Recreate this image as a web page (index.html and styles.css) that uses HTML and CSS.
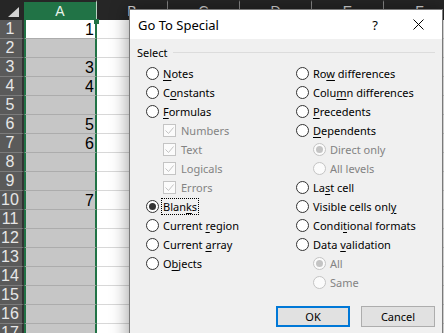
FILE: index.html
```html
<!DOCTYPE html>
<html>
<head>
<title>Go To Special</title>
<meta charset="utf-8">
<link rel="stylesheet" href="styles.css">
</head>
<body>

<div class="sheet">
	<div class="corner"><span class="tri"></span></div>
	<div class="colhead sel">A</div>
	<div class="colhead">B</div>
	<div class="colhead">C</div>
	<div class="colhead">D</div>
	<div class="colhead">E</div>
	<div class="colhead">F</div>

	<div class="rowhead">1</div><div class="cell a active">1</div><div class="cell"></div><div class="cell"></div><div class="cell"></div><div class="cell"></div><div class="cell"></div>
	<div class="rowhead">2</div><div class="cell a"></div><div class="cell"></div><div class="cell"></div><div class="cell"></div><div class="cell"></div><div class="cell"></div>
	<div class="rowhead">3</div><div class="cell a">3</div><div class="cell"></div><div class="cell"></div><div class="cell"></div><div class="cell"></div><div class="cell"></div>
	<div class="rowhead">4</div><div class="cell a">4</div><div class="cell"></div><div class="cell"></div><div class="cell"></div><div class="cell"></div><div class="cell"></div>
	<div class="rowhead">5</div><div class="cell a"></div><div class="cell"></div><div class="cell"></div><div class="cell"></div><div class="cell"></div><div class="cell"></div>
	<div class="rowhead">6</div><div class="cell a">5</div><div class="cell"></div><div class="cell"></div><div class="cell"></div><div class="cell"></div><div class="cell"></div>
	<div class="rowhead">7</div><div class="cell a">6</div><div class="cell"></div><div class="cell"></div><div class="cell"></div><div class="cell"></div><div class="cell"></div>
	<div class="rowhead">8</div><div class="cell a"></div><div class="cell"></div><div class="cell"></div><div class="cell"></div><div class="cell"></div><div class="cell"></div>
	<div class="rowhead">9</div><div class="cell a"></div><div class="cell"></div><div class="cell"></div><div class="cell"></div><div class="cell"></div><div class="cell"></div>
	<div class="rowhead">10</div><div class="cell a">7</div><div class="cell"></div><div class="cell"></div><div class="cell"></div><div class="cell"></div><div class="cell"></div>
	<div class="rowhead">11</div><div class="cell a"></div><div class="cell"></div><div class="cell"></div><div class="cell"></div><div class="cell"></div><div class="cell"></div>
	<div class="rowhead">12</div><div class="cell a"></div><div class="cell"></div><div class="cell"></div><div class="cell"></div><div class="cell"></div><div class="cell"></div>
	<div class="rowhead">13</div><div class="cell a"></div><div class="cell"></div><div class="cell"></div><div class="cell"></div><div class="cell"></div><div class="cell"></div>
	<div class="rowhead">14</div><div class="cell a"></div><div class="cell"></div><div class="cell"></div><div class="cell"></div><div class="cell"></div><div class="cell"></div>
	<div class="rowhead">15</div><div class="cell a"></div><div class="cell"></div><div class="cell"></div><div class="cell"></div><div class="cell"></div><div class="cell"></div>
	<div class="rowhead">16</div><div class="cell a"></div><div class="cell"></div><div class="cell"></div><div class="cell"></div><div class="cell"></div><div class="cell"></div>
	<div class="rowhead">17</div><div class="cell a"></div><div class="cell"></div><div class="cell"></div><div class="cell"></div><div class="cell"></div><div class="cell"></div>

	<span class="handle"></span>
</div>

<div class="dialog">
	<div class="titlebar">
		<span class="title">Go To Special</span>
		<span class="help">?</span>
		<svg class="close" width="11" height="11" viewBox="0 0 11 11">
			<path d="M0.5 0.5 L10.5 10.5 M10.5 0.5 L0.5 10.5" stroke="#000" stroke-width="1" fill="none"/>
		</svg>
	</div>

	<div class="body">
		<div class="group">
			<span>Select</span>
			<span class="rule"></span>
		</div>

		<div class="options">
			<div class="col">
				<div class="opt"><span class="radio"></span><span><u>N</u>otes</span></div>
				<div class="opt"><span class="radio"></span><span>C<u>o</u>nstants</span></div>
				<div class="opt"><span class="radio"></span><span><u>F</u>ormulas</span></div>
				<div class="opt sub off"><span class="check"><svg width="11" height="11" viewBox="0 0 11 11"><path d="M1.5 5.5 L4.5 8.5 L9.5 2.5" stroke="#c4c4c4" fill="none"/></svg></span><span>Numbers</span></div>
				<div class="opt sub off"><span class="check"><svg width="11" height="11" viewBox="0 0 11 11"><path d="M1.5 5.5 L4.5 8.5 L9.5 2.5" stroke="#c4c4c4" fill="none"/></svg></span><span>Text</span></div>
				<div class="opt sub off"><span class="check"><svg width="11" height="11" viewBox="0 0 11 11"><path d="M1.5 5.5 L4.5 8.5 L9.5 2.5" stroke="#c4c4c4" fill="none"/></svg></span><span>Logicals</span></div>
				<div class="opt sub off"><span class="check"><svg width="11" height="11" viewBox="0 0 11 11"><path d="M1.5 5.5 L4.5 8.5 L9.5 2.5" stroke="#c4c4c4" fill="none"/></svg></span><span>Errors</span></div>
				<div class="opt"><span class="radio on"></span><span class="focus">Blan<u>k</u>s</span></div>
				<div class="opt"><span class="radio"></span><span>Current <u>r</u>egion</span></div>
				<div class="opt"><span class="radio"></span><span>Current <u>a</u>rray</span></div>
				<div class="opt"><span class="radio"></span><span>O<u>b</u>jects</span></div>
			</div>
			<div class="col">
				<div class="opt"><span class="radio"></span><span>Ro<u>w</u> differences</span></div>
				<div class="opt"><span class="radio"></span><span>Colu<u>m</u>n differences</span></div>
				<div class="opt"><span class="radio"></span><span><u>P</u>recedents</span></div>
				<div class="opt"><span class="radio"></span><span><u>D</u>ependents</span></div>
				<div class="opt sub off"><span class="radio on"></span><span>Direct only</span></div>
				<div class="opt sub off"><span class="radio"></span><span>All levels</span></div>
				<div class="opt"><span class="radio"></span><span>La<u>s</u>t cell</span></div>
				<div class="opt"><span class="radio"></span><span>Visible cells onl<u>y</u></span></div>
				<div class="opt"><span class="radio"></span><span>Condi<u>t</u>ional formats</span></div>
				<div class="opt"><span class="radio"></span><span>Data <u>v</u>alidation</span></div>
				<div class="opt sub off"><span class="radio on"></span><span>All</span></div>
				<div class="opt sub off"><span class="radio"></span><span>Same</span></div>
			</div>
		</div>

		<div class="buttons">
			<button class="btn default">OK</button>
			<button class="btn">Cancel</button>
		</div>
	</div>
</div>

</body>
</html>
```

FILE: styles.css
```css
body {
	margin: 0;
	background-color: #ffffff;
	overflow: hidden;
	font-family: "Noto Sans", "Open Sans", sans-serif;
}

/* spreadsheet behind the dialog */
.sheet {
	position: relative;
	display: grid;
	grid-template-columns: 24px 73px 71px 72px 72px 72px 72px;
	grid-template-rows: 20px repeat(17, 19px);
	background-color: #ffffff;
}
.corner {
	position: relative;
	background-color: #262626;
	border-right: 2px solid #262626;
}
.tri {
	position: absolute;
	right: 3px;
	bottom: 3px;
	width: 0;
	height: 0;
	border-left: 11px solid transparent;
	border-bottom: 10px solid #d2d2d2;
}
.colhead {
	background-color: #262626;
	border-top: 2px solid #262626;
	border-right: 1px solid #8a8a8a;
	color: #d8d8d8;
	font-family: "Liberation Sans", sans-serif;
	font-size: 14px;
	line-height: 18px;
	text-align: center;
}
.colhead.sel {
	background-color: #217346;
	border-right: 1px solid #b9d2c2;
	color: #e9f3ec;
}
.rowhead {
	background-color: #5a5a5a;
	border-right: 2px solid #333333;
	border-bottom: 1px solid #7c7c7c;
	color: #e6e6e6;
	font-family: "Liberation Sans Narrow", "Liberation Sans", sans-serif;
	font-size: 16px;
	line-height: 18px;
	text-align: center;
	padding-right: 2px;
}
.cell {
	border-right: 1px solid #d8d8d8;
	border-bottom: 1px solid #d8d8d8;
}
.cell.a {
	background-color: #c6c6c6;
	border-left: 2px solid #217346;
	border-right: 2px solid #217346;
	border-bottom: 1px solid #acacac;
	color: #000000;
	font-family: "Liberation Sans Narrow", "Liberation Sans", sans-serif;
	font-size: 16px;
	line-height: 19px;
	text-align: right;
	padding-right: 1px;
}
.cell.active {
	background-color: #ffffff;
}
.handle {
	position: absolute;
	left: 94px;
	top: 19px;
	width: 5px;
	height: 5px;
	background-color: #217346;
}

/* dialog */
.dialog {
	position: absolute;
	left: 129px;
	top: 9px;
	width: 312px;
	height: 340px;
	border: 1px solid #7a7a7a;
	background-color: #f0f0f0;
	box-shadow: 0 0 16px 2px rgba(0, 0, 0, 0.35);
	font-size: 11px;
	color: #000000;
}
.titlebar {
	display: flex;
	align-items: center;
	height: 29px;
	background-color: #ffffff;
	padding-left: 8px;
}
.title {
	flex: 1;
	font-size: 13px;
}
.help {
	font-size: 13px;
	margin-right: 35px;
}
.close {
	margin-right: 18px;
}
.body {
	padding: 4px 7px 0 7px;
}
.group {
	display: flex;
	align-items: center;
	gap: 5px;
	height: 18px;
}
.rule {
	flex: 1;
	height: 1px;
	background-color: #dcdcdc;
}
.options {
	display: flex;
	margin-top: 3px;
	padding-left: 9px;
}
.col {
	flex: none;
	width: 150px;
}
.opt {
	display: flex;
	align-items: center;
	gap: 4px;
	height: 19px;
	white-space: nowrap;
}
.opt.sub {
	padding-left: 17px;
}
.opt.off {
	color: #838383;
}
.radio {
	position: relative;
	box-sizing: border-box;
	width: 13px;
	height: 13px;
	border: 1px solid #333333;
	border-radius: 50%;
	background-color: #ffffff;
	flex: none;
}
.radio.on::after {
	content: "";
	position: absolute;
	left: 2px;
	top: 2px;
	width: 7px;
	height: 7px;
	border-radius: 50%;
	background-color: #333333;
}
.off .radio {
	border-color: #c4c4c4;
	background-color: #fbfbfb;
}
.off .radio.on::after {
	background-color: #c4c4c4;
}
.check {
	display: flex;
	align-items: center;
	justify-content: center;
	box-sizing: border-box;
	width: 13px;
	height: 13px;
	border: 1px solid #c4c4c4;
	background-color: #fbfbfb;
	flex: none;
	margin-right: 1px;
}
.focus {
	outline: 1px dotted #000000;
	outline-offset: 0;
	padding: 0 1px;
	margin-left: -1px;
}
u {
	text-underline-offset: 2px;
}
.buttons {
	display: flex;
	justify-content: flex-end;
	gap: 11px;
	margin-top: 14px;
	padding-right: 0;
}
.btn {
	box-sizing: border-box;
	width: 74px;
	height: 21px;
	border: 1px solid #adadad;
	background-color: #e1e1e1;
	font-family: "Noto Sans", "Open Sans", sans-serif;
	font-size: 11px;
	color: #000000;
	padding: 0;
}
.btn.default {
	border: 2px solid #0078d7;
}
```
